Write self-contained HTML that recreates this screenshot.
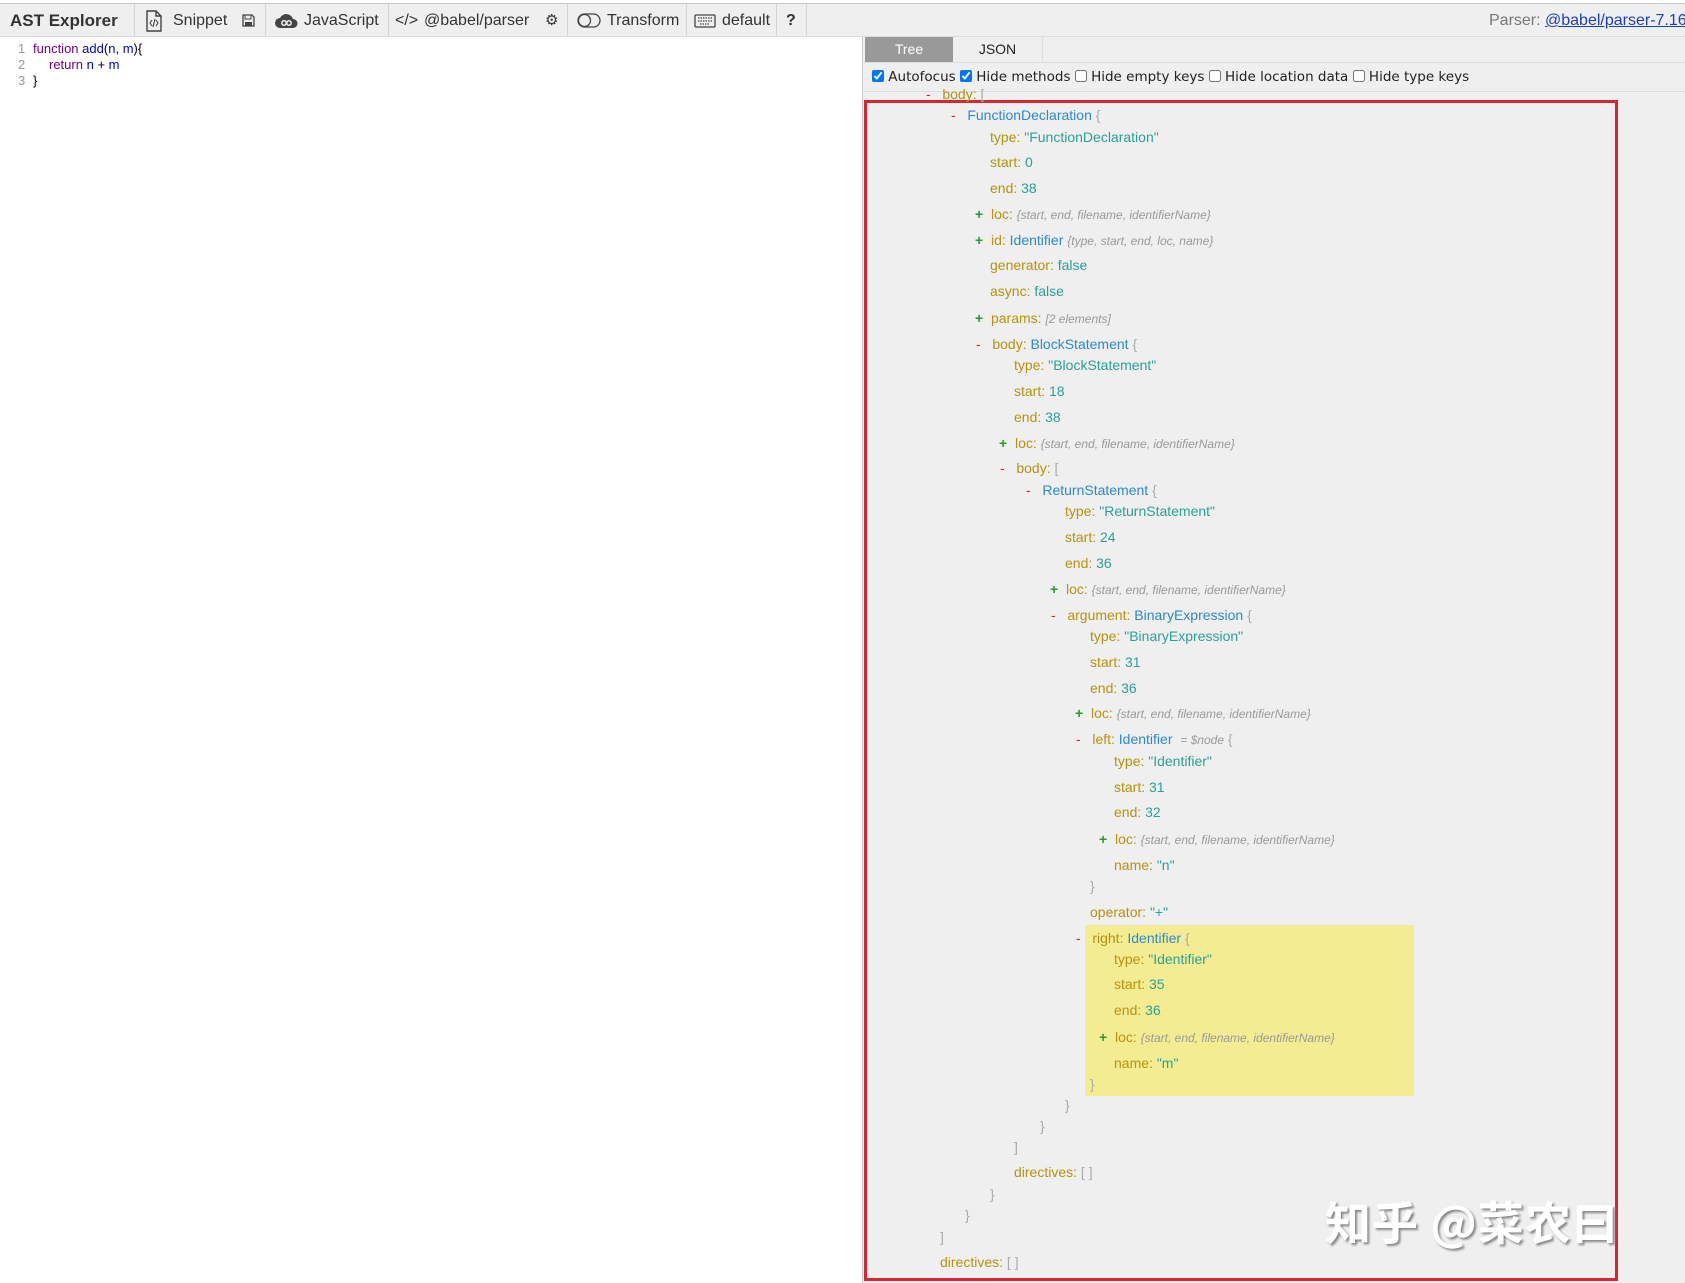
<!DOCTYPE html>
<html><head><meta charset="utf-8"><style>
*{margin:0;padding:0;box-sizing:border-box}
body{width:1685px;height:1283px;overflow:hidden;background:#fff;font-family:"Liberation Sans",Arial,sans-serif;position:relative}
.a{position:absolute;white-space:nowrap}
#tb{position:absolute;left:0;top:3px;width:1685px;height:34px;background:#efefef;border-top:1px solid #c8c8c8;border-bottom:1px solid #ddd;overflow:hidden}
.sep{position:absolute;top:0;width:1px;height:33px;background:#d4d4d4}
.ti{position:absolute;top:7px;font-size:16px;color:#333;line-height:20px;white-space:nowrap}
.l{position:absolute;font-size:14px;line-height:18px;white-space:nowrap;color:#b8920a}
.k{color:#b8920a}.s{color:#2aa198}.t{color:#2a8ad0}.g{color:#999;font-style:italic;font-size:12px}.b{color:#aaa}
.m{color:#e02020}.p{color:#2a9a2a;font-weight:bold}
.code{position:absolute;font-size:13px;line-height:16px;font-family:"Liberation Sans",sans-serif}
</style></head><body>
<div id="tb">
<div class="ti" style="left:10px;font-weight:bold;font-size:17px;color:#333">AST Explorer</div>
<div class="sep" style="left:134px"></div>
<svg class="a" style="left:145px;top:6px" width="18" height="22" viewBox="0 0 18 22"><path d="M2 1h9l5 5v15H2z M11 1v5h5" fill="none" stroke="#444" stroke-width="1.4"/><path d="M7 10l-2 3 2 3M11 10l2 3-2 3M10 9l-2 8" fill="none" stroke="#444" stroke-width="1.1"/></svg>
<div class="ti" style="left:173px">Snippet</div>
<svg class="a" style="left:242px;top:10px" width="13" height="13" viewBox="0 0 13 13"><path d="M1 1h9l2 2v9H1z" fill="none" stroke="#444" stroke-width="1.3"/><rect x="3" y="1" width="6" height="4" fill="none" stroke="#444"/><rect x="3" y="8" width="7" height="4" fill="#444"/></svg>
<div class="sep" style="left:265px"></div>
<svg class="a" style="left:275px;top:8px" width="23" height="17" viewBox="0 0 23 17"><path d="M5 16a5 5 0 0 1 0-10 7 7 0 0 1 13 1 4.5 4.5 0 0 1 0 9z" fill="#444"/><circle cx="9" cy="11" r="2.2" fill="none" stroke="#efefef" stroke-width="1.5"/><circle cx="14" cy="11" r="2.2" fill="none" stroke="#efefef" stroke-width="1.5"/></svg>
<div class="ti" style="left:304px">JavaScript</div>
<div class="sep" style="left:388px"></div>
<div class="ti" style="left:395px">&lt;/&gt;</div>
<div class="ti" style="left:424px">@babel/parser</div>
<div class="ti" style="left:545px;font-size:15px">&#9881;</div>
<div class="sep" style="left:567px"></div>
<svg class="a" style="left:577px;top:9px" width="24" height="15" viewBox="0 0 24 15"><rect x="1" y="1" width="22" height="13" rx="6.5" fill="none" stroke="#444" stroke-width="1.3"/><circle cx="7.5" cy="7.5" r="6" fill="none" stroke="#444" stroke-width="1.3"/></svg>
<div class="ti" style="left:607px">Transform</div>
<div class="sep" style="left:686px"></div>
<svg class="a" style="left:694px;top:10px" width="22" height="14" viewBox="0 0 22 14"><rect x="1" y="1" width="20" height="12" rx="1" fill="none" stroke="#444" stroke-width="1.3"/><path d="M4 4h14M4 7h14M6 10h10" stroke="#444" stroke-width="1.3" stroke-dasharray="1.5 1"/></svg>
<div class="ti" style="left:722px">default</div>
<div class="sep" style="left:776px"></div>
<div class="ti" style="left:786px;font-weight:bold">?</div>
<div class="sep" style="left:806px"></div>
<div class="ti" style="left:1489px;color:#777">Parser: <span style="color:#1a3dcc;text-decoration:underline">@babel/parser-7.16</span></div>
</div>
<div class="code" style="left:18px;top:41px;color:#999">1</div>
<div class="code" style="left:18px;top:57px;color:#999">2</div>
<div class="code" style="left:18px;top:73px;color:#999">3</div>
<div class="code" style="left:33px;top:41px"><span style="color:#770088">function</span> <span style="color:#0000cc">add</span>(<span style="color:#0000cc">n</span>, <span style="color:#0000cc">m</span>){</div>
<div class="code" style="left:49px;top:57px"><span style="color:#770088">return</span> <span style="color:#0000cc">n</span> + <span style="color:#0000cc">m</span></div>
<div class="code" style="left:33px;top:73px">}</div>
<div class="a" style="left:862px;top:37px;width:823px;height:1246px;background:#efefef;border-left:1px solid #ccc"></div>
<div class="a" style="left:865px;top:37px;width:88px;height:25px;background:#999;color:#fff;font-size:14px;text-align:center;line-height:25px">Tree</div>
<div class="a" style="left:953px;top:37px;width:90px;height:25px;color:#222;font-size:14px;text-align:center;line-height:25px;border-right:1px solid #ddd">JSON</div>
<div class="a" style="left:862px;top:62px;width:823px;height:1px;background:#ddd"></div>
<div class="a" style="left:872px;top:69px;color:#222;font-family:'DejaVu Sans',sans-serif;font-size:13.5px"><input type="checkbox" checked style="width:12px;height:12px;vertical-align:-1px"> Autofocus <input type="checkbox" checked style="width:12px;height:12px;vertical-align:-1px"> Hide methods <input type="checkbox" style="width:12px;height:12px;vertical-align:-1px"> Hide empty keys <input type="checkbox" style="width:12px;height:12px;vertical-align:-1px"> Hide location data <input type="checkbox" style="width:12px;height:12px;vertical-align:-1px"> Hide type keys</div>
<div class="a" style="left:862px;top:91px;width:823px;height:1px;background:#ddd"></div>
<div class="a" style="left:1085px;top:925px;width:329px;height:171px;background:#f4ec93"></div>
<div style="position:absolute;left:864px;top:100px;width:754px;height:1181px;border:3px solid #d8252f"></div>
<div class="l" style="left:926px;top:85px"><span class="m">-</span>&nbsp;&nbsp; body: <span class="b">[</span></div>
<div class="l" style="left:951px;top:106px"><span class="m">-</span>&nbsp;&nbsp; <span class="t">FunctionDeclaration</span> <span class="b">{</span></div>
<div class="l" style="left:990px;top:128px">type: <span class="s">"FunctionDeclaration"</span></div>
<div class="l" style="left:990px;top:153px">start: <span class="s">0</span></div>
<div class="l" style="left:990px;top:179px">end: <span class="s">38</span></div>
<div class="l" style="left:975px;top:205px"><span class="p">+</span>&nbsp; loc: <span class="g">{start, end, filename, identifierName}</span></div>
<div class="l" style="left:975px;top:231px"><span class="p">+</span>&nbsp; id: <span class="t">Identifier</span> <span class="g">{type, start, end, loc, name}</span></div>
<div class="l" style="left:990px;top:256px">generator: <span class="s">false</span></div>
<div class="l" style="left:990px;top:282px">async: <span class="s">false</span></div>
<div class="l" style="left:975px;top:309px"><span class="p">+</span>&nbsp; params: <span class="g">[2 elements]</span></div>
<div class="l" style="left:976px;top:335px"><span class="m">-</span>&nbsp;&nbsp; body: <span class="t">BlockStatement</span> <span class="b">{</span></div>
<div class="l" style="left:1014px;top:356px">type: <span class="s">"BlockStatement"</span></div>
<div class="l" style="left:1014px;top:382px">start: <span class="s">18</span></div>
<div class="l" style="left:1014px;top:408px">end: <span class="s">38</span></div>
<div class="l" style="left:999px;top:434px"><span class="p">+</span>&nbsp; loc: <span class="g">{start, end, filename, identifierName}</span></div>
<div class="l" style="left:1000px;top:459px"><span class="m">-</span>&nbsp;&nbsp; body: <span class="b">[</span></div>
<div class="l" style="left:1026px;top:481px"><span class="m">-</span>&nbsp;&nbsp; <span class="t">ReturnStatement</span> <span class="b">{</span></div>
<div class="l" style="left:1065px;top:502px">type: <span class="s">"ReturnStatement"</span></div>
<div class="l" style="left:1065px;top:528px">start: <span class="s">24</span></div>
<div class="l" style="left:1065px;top:554px">end: <span class="s">36</span></div>
<div class="l" style="left:1050px;top:580px"><span class="p">+</span>&nbsp; loc: <span class="g">{start, end, filename, identifierName}</span></div>
<div class="l" style="left:1051px;top:606px"><span class="m">-</span>&nbsp;&nbsp; argument: <span class="t">BinaryExpression</span> <span class="b">{</span></div>
<div class="l" style="left:1090px;top:627px">type: <span class="s">"BinaryExpression"</span></div>
<div class="l" style="left:1090px;top:653px">start: <span class="s">31</span></div>
<div class="l" style="left:1090px;top:679px">end: <span class="s">36</span></div>
<div class="l" style="left:1075px;top:704px"><span class="p">+</span>&nbsp; loc: <span class="g">{start, end, filename, identifierName}</span></div>
<div class="l" style="left:1076px;top:730px"><span class="m">-</span>&nbsp;&nbsp; left: <span class="t">Identifier</span> &nbsp;<span class="g">= $node</span> <span class="b">{</span></div>
<div class="l" style="left:1114px;top:752px">type: <span class="s">"Identifier"</span></div>
<div class="l" style="left:1114px;top:778px">start: <span class="s">31</span></div>
<div class="l" style="left:1114px;top:803px">end: <span class="s">32</span></div>
<div class="l" style="left:1099px;top:830px"><span class="p">+</span>&nbsp; loc: <span class="g">{start, end, filename, identifierName}</span></div>
<div class="l" style="left:1114px;top:856px">name: <span class="s">"n"</span></div>
<div class="l b" style="left:1090px;top:877px">}</div>
<div class="l" style="left:1090px;top:903px">operator: <span class="s">"+"</span></div>
<div class="l" style="left:1076px;top:929px"><span class="m">-</span>&nbsp;&nbsp; right: <span class="t">Identifier</span> <span class="b">{</span></div>
<div class="l" style="left:1114px;top:950px">type: <span class="s">"Identifier"</span></div>
<div class="l" style="left:1114px;top:975px">start: <span class="s">35</span></div>
<div class="l" style="left:1114px;top:1001px">end: <span class="s">36</span></div>
<div class="l" style="left:1099px;top:1028px"><span class="p">+</span>&nbsp; loc: <span class="g">{start, end, filename, identifierName}</span></div>
<div class="l" style="left:1114px;top:1054px">name: <span class="s">"m"</span></div>
<div class="l b" style="left:1090px;top:1075px">}</div>
<div class="l b" style="left:1065px;top:1096px">}</div>
<div class="l b" style="left:1040px;top:1117px">}</div>
<div class="l b" style="left:1014px;top:1138px">]</div>
<div class="l" style="left:1014px;top:1163px">directives: <span class="b">[ ]</span></div>
<div class="l b" style="left:990px;top:1185px">}</div>
<div class="l b" style="left:965px;top:1206px">}</div>
<div class="l b" style="left:940px;top:1228px">]</div>
<div class="l" style="left:940px;top:1253px">directives: <span class="b">[ ]</span></div>
<div class="a" style="left:1325px;top:1188px;font-size:46px;font-family:'Noto Sans CJK SC',sans-serif;color:#fff;text-shadow:2px 2px 2px #888;font-weight:bold;letter-spacing:1px">知乎 @菜农曰</div>
</body></html>
